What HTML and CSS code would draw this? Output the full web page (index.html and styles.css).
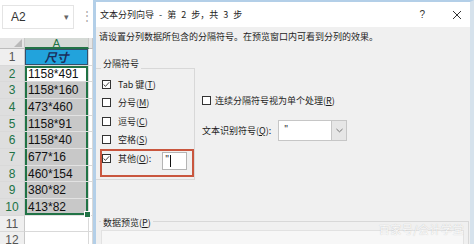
FILE: index.html
```html
<!DOCTYPE html>
<html lang="zh">
<head>
<meta charset="utf-8">
<title>文本分列向导</title>
<link rel="stylesheet" href="styles.css">
</head>
<body>
<div class="sheet">
  <div class="namebar">
    <div class="namebox"><span>A2</span><span class="caret">▾</span></div>
    <span class="vsep">⋮</span>
  </div>
  <div class="grid">
    <div class="ch corner"></div><div class="ch ch-sel">A</div><div class="ch"></div>
    <div class="rh">1</div><div class="cell head">尺寸</div><div class="cell"></div>
    <div class="rh rh-sel">2</div><div class="cell active sel sel-top">1158*491</div><div class="cell"></div>
    <div class="rh rh-sel">3</div><div class="cell selc sel">1158*160</div><div class="cell"></div>
    <div class="rh rh-sel">4</div><div class="cell selc sel">473*460</div><div class="cell"></div>
    <div class="rh rh-sel">5</div><div class="cell selc sel">1158*91</div><div class="cell"></div>
    <div class="rh rh-sel">6</div><div class="cell selc sel">1158*40</div><div class="cell"></div>
    <div class="rh rh-sel">7</div><div class="cell selc sel">677*16</div><div class="cell"></div>
    <div class="rh rh-sel">8</div><div class="cell selc sel">460*154</div><div class="cell"></div>
    <div class="rh rh-sel">9</div><div class="cell selc sel">380*82</div><div class="cell"></div>
    <div class="rh rh-sel">10</div><div class="cell selc sel sel-bot last">413*82<span class="handle"></span></div><div class="cell"></div>
    <div class="rh">11</div><div class="cell"></div><div class="cell"></div>
    <div class="rh">12</div><div class="cell"></div><div class="cell"></div>
  </div>
</div>
<div class="dialog">
  <div class="titlebar">
    <span class="title">文本分列向导 - 第 2 步，共 3 步</span>
    <span class="help">?</span>
    <svg class="close" viewBox="0 0 10 10" width="10" height="10"><path d="M1 1 L9 9 M9 1 L1 9" stroke="#333" stroke-width="1" fill="none"/></svg>
  </div>
  <div class="dbody">
    <p class="intro">请设置分列数据所包含的分隔符号。在预览窗口内可看到分列的效果。</p>
    <div class="cols">
      <div class="group">
        <div class="legend">分隔符号</div>
        <div class="opts">
          <div class="opt"><span class="cb"><svg viewBox="0 0 9 9" width="7" height="7"><path d="M0.8 4.6 L3.2 6.9 L8 1.6" stroke="#222" stroke-width="1.1" fill="none"/></svg></span><span>Tab 键(<u>T</u>)</span></div>
          <div class="opt"><span class="cb"></span><span>分号(<u>M</u>)</span></div>
          <div class="opt"><span class="cb"></span><span>逗号(<u>C</u>)</span></div>
          <div class="opt"><span class="cb"></span><span>空格(<u>S</u>)</span></div>
          <div class="opt other"><span class="cb"><svg viewBox="0 0 9 9" width="7" height="7"><path d="M0.8 4.6 L3.2 6.9 L8 1.6" stroke="#222" stroke-width="1.1" fill="none"/></svg></span><span class="olabel">其他(<u>O</u>):</span><span class="field">"<i class="cursor"></i></span></div>
        </div>
      </div>
      <div class="right">
        <div class="opt"><span class="cb"></span><span>连续分隔符号视为单个处理(<u>R</u>)</span></div>
        <div class="qual">
          <span class="qlabel">文本识别符号(<u>Q</u>):</span>
          <div class="select"><span class="val">"</span><span class="drop"><svg viewBox="0 0 8 5" width="7" height="5"><path d="M0.5 0.8 L4 4 L7.5 0.8" stroke="#666" stroke-width="1" fill="none"/></svg></span></div>
        </div>
      </div>
    </div>
    <div class="preview">
      <div class="legend">数据预览(<u>P</u>)</div>
      <div class="pbox"></div>
    </div>
    <span class="watermark">百家号/会计学堂</span>
  </div>
</div>
</body>
</html>
```
FILE: styles.css
```css
html, body {
  margin: 0;
  padding: 0;
}
body {
  width: 474px;
  height: 244px;
  overflow: hidden;
  display: flex;
  background: #fff;
  font-family: "Liberation Sans", "Noto Sans CJK SC", sans-serif;
}

/* ---------- spreadsheet ---------- */
.sheet {
  width: 93px;
  flex: none;
}
.namebar {
  height: 38px;
  box-sizing: border-box;
  padding-top: 5px;
  display: flex;
  align-items: flex-start;
  background: #fff;
}
.namebox {
  margin-left: 2px;
  width: 76px;
  height: 24px;
  box-sizing: border-box;
  border: 1px solid #e4e4e4;
  display: flex;
  align-items: center;
  justify-content: space-between;
  padding: 0 4px 0 8px;
  font-size: 12px;
  color: #333;
}
.caret {
  font-size: 9px;
  color: #666;
}
.vsep {
  margin-left: 7px;
  margin-top: 4px;
  font-size: 12px;
  color: #aaa;
}
.grid {
  display: grid;
  grid-template-columns: 25px 64px 4px;
  grid-template-rows: 11px repeat(12, 16.667px);
}
.ch {
  background: #e6e6e6;
  border-right: 1px solid #c8c8c8;
  border-bottom: 1px solid #bdbdbd;
  box-sizing: border-box;
  font-size: 11px;
  line-height: 10px;
  text-align: center;
  color: #444;
}
.ch-sel {
  background: #d5dad6;
  color: #217346;
  border-bottom: 2px solid #217346;
}
.corner {
  position: relative;
}
.corner::after {
  content: "";
  position: absolute;
  right: 2px;
  bottom: 1px;
  border-style: solid;
  border-width: 0 0 8px 8px;
  border-color: transparent transparent #b9b9b9 transparent;
}
.rh {
  background: #efefef;
  color: #555;
  font-size: 12px;
  line-height: 16px;
  text-align: center;
  border-bottom: 1px solid #d9d9d9;
  border-right: 1px solid #c8c8c8;
  box-sizing: border-box;
}
.rh-sel {
  background: #dedede;
  color: #217346;
}
.cell {
  box-sizing: border-box;
  border-bottom: 1px solid #d9d9d9;
  border-right: 1px solid #d9d9d9;
  font-size: 12px;
  line-height: 16px;
  padding-left: 3px;
  color: #111;
  white-space: nowrap;
  overflow: hidden;
}
.head {
  background: #22a3dc;
  color: #1b2f5c;
  font-weight: bold;
  font-style: italic;
  text-align: center;
  padding-left: 0;
  font-family: "Noto Sans CJK SC", sans-serif;
  box-shadow: inset 0 0 0 1px #33506c;
}
.selc {
  background: #c8c8c8;
  border-bottom-color: #e2e2e2;
}
.active {
  background: #fff;
}
.sel {
  box-shadow: inset 2px 0 #217346, inset -2px 0 #217346;
}
.sel-top {
  box-shadow: inset 2px 0 #217346, inset -2px 0 #217346, inset 0 2px #217346;
}
.sel-bot {
  box-shadow: inset 2px 0 #217346, inset -2px 0 #217346, inset 0 -2px #217346;
}
.last {
  position: relative;
  overflow: visible;
  z-index: 2;
}
.handle {
  position: absolute;
  right: -3px;
  bottom: -3px;
  width: 5px;
  height: 5px;
  background: #217346;
  border: 1px solid #fff;
}

/* ---------- dialog ---------- */
.dialog {
  flex: 1;
  display: flex;
  flex-direction: column;
  min-height: 0;
  background: #f0f0f0;
  border-left: 3px solid #b3cfe8;
  border-top: 2px solid #b3cfe8;
  border-right: 4px solid #d6e2ec;
  font-family: "Noto Sans CJK SC", sans-serif;
  font-size: 9px;
  color: #1e1e1e;
}
.titlebar {
  height: 25px;
  flex: none;
  background: #fff;
  display: flex;
  align-items: center;
  padding-left: 4px;
}
.title {
  word-spacing: 3px;
  white-space: pre;
}
.help {
  margin-left: auto;
  font-family: "Liberation Sans", sans-serif;
  font-size: 10px;
  color: #333;
}
.close {
  margin-left: 27px;
  margin-right: 8px;
}
.dbody {
  flex: 1;
  min-height: 0;
  overflow: hidden;
  position: relative;
}
.intro {
  margin: 4px 0 0 3px;
  line-height: 12px;
}
.cols {
  margin-top: 25px;
  display: flex;
  align-items: flex-start;
}
.group {
  width: 99px;
  flex: none;
  box-sizing: border-box;
  border-top: 1px solid #d8d8d8;
  border-right: 1px solid #d8d8d8;
  border-bottom: 1px solid #d8d8d8;
  padding-bottom: 2px;
}
.legend {
  width: fit-content;
  margin: -11px 0 0 5px;
  padding: 0 2px;
  background: #f0f0f0;
  line-height: 11px;
}
.opts {
  padding-top: 6px;
}
.opt {
  display: flex;
  align-items: center;
  height: 18.5px;
  padding-left: 6px;
  gap: 7px;
  white-space: nowrap;
}
.cb {
  width: 9px;
  height: 9px;
  flex: none;
  box-sizing: border-box;
  border: 1px solid #333;
  background: #fff;
  display: inline-flex;
  align-items: center;
  justify-content: center;
}
.other {
  box-sizing: border-box;
  margin-left: 4px;
  width: 94px;
  height: 28px;
  border: 2px solid #c9563e;
  padding: 1px 0 0 0;
  align-items: flex-start;
}
.other .cb {
  margin-top: 2px;
}
.olabel {
  line-height: 11px;
  margin-top: 1px;
}
.field {
  margin-left: auto;
  margin-right: 5px;
  width: 25px;
  height: 18px;
  box-sizing: border-box;
  background: #fff;
  border: 1px solid #b4b4b4;
  font-size: 9px;
  line-height: 14px;
  padding-left: 2px;
  display: flex;
  align-items: flex-start;
}
.cursor {
  display: inline-block;
  width: 1px;
  height: 12px;
  margin: 2px 0 0 1px;
  background: #111;
}
.right {
  margin-left: 7px;
  padding-top: 26px;
}
.right .opt {
  padding-left: 0;
  height: 12px;
  gap: 4px;
}
.qual {
  display: flex;
  align-items: center;
  margin-top: 14px;
}
.qlabel {
  width: 76px;
  white-space: nowrap;
}
.select {
  width: 69px;
  height: 21px;
  box-sizing: border-box;
  background: #fff;
  border: 1px solid #c6c6c6;
  display: flex;
}
.val {
  flex: 1;
  padding-left: 5px;
  line-height: 17px;
  font-size: 9px;
}
.drop {
  width: 14px;
  background: #e6e6e6;
  border-left: 1px solid #c6c6c6;
  display: flex;
  align-items: center;
  justify-content: center;
}
.preview {
  margin: 41px 1px 0 3px;
  border-top: 1px solid #d8d8d8;
  border-right: 1px solid #d8d8d8;
  height: 30px;
}
.preview .legend {
  margin: -5px 0 0 2px;
}
.pbox {
  margin: 2px 4px 0 2px;
  height: 20px;
  background: #f7f7f7;
  border: 1px solid #e2e2e2;
}
.watermark {
  position: absolute;
  right: 6px;
  bottom: 8px;
  font-size: 11px;
  line-height: 13px;
  color: rgba(255, 255, 255, 0.92);
  text-shadow: 0 0 1px rgba(0, 0, 0, 0.25);
  letter-spacing: 0.5px;
}
```
